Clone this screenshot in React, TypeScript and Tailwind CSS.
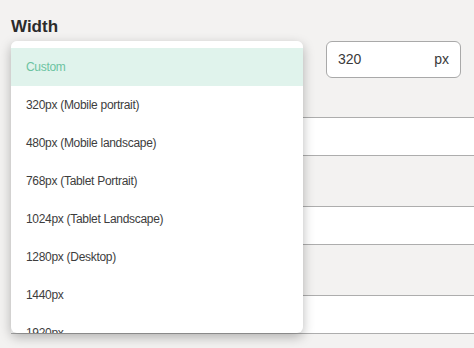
import React from "react";

const options = [
  "Custom",
  "320px (Mobile portrait)",
  "480px (Mobile landscape)",
  "768px (Tablet Portrait)",
  "1024px (Tablet Landscape)",
  "1280px (Desktop)",
  "1440px",
  "1920px",
];

export default function App() {
  return (
    <div
      className="relative w-[474px] h-[348px] overflow-hidden bg-[#f3f2f1] pt-[18px] pl-[11px]"
      style={{ fontFamily: '"Liberation Sans", Arial, sans-serif' }}
    >
      <h1 className="text-[17px] leading-none font-bold text-[#2b2b2b]">Width</h1>

      <div className="mt-[6px] flex items-start pr-[13px]">
        <div className="w-[292px] h-[37px] rounded-[6px] bg-white" />
        <div className="ml-auto flex h-[37px] w-[135px] items-center justify-between rounded-[6px] border border-[#a9a9a9] bg-white px-[11px] text-[14px] text-[#3a3a3a]">
          <span>320</span>
          <span>px</span>
        </div>
      </div>

      <div className="mt-[39px] flex flex-col gap-[50px]">
        <div className="h-[39px] border-y border-[#adadad] bg-white" />
        <div className="h-[39px] border-y border-[#adadad] bg-white" />
        <div className="h-[39px] border-y border-[#adadad] bg-white" />
      </div>

      <div className="absolute left-[11px] top-[41px] h-[292px] w-[292px] overflow-hidden rounded-[6px] bg-white py-[7px] shadow-[0_4px_12px_rgba(0,0,0,0.28)]">
        {options.map((o, i) => (
          <div
            key={o}
            className={
              i === 0
                ? "flex h-[38px] items-center bg-[#e0f3ec] px-[15px] text-[12px] tracking-[-0.3px] text-[#6cc3a1]"
                : "flex h-[38px] items-center px-[15px] text-[12px] tracking-[-0.3px] text-[#3d3d3d]"
            }
          >
            {o}
          </div>
        ))}
      </div>
    </div>
  );
}
